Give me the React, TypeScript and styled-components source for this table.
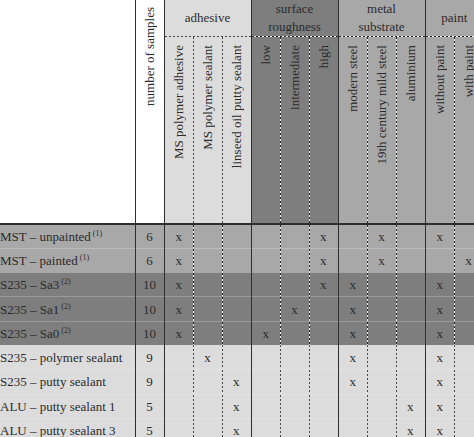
import styled, { createGlobalStyle, css } from 'styled-components';

type Tone = 'white' | 'light' | 'mid' | 'dark';
type Edge = 'solid' | 'dashed' | 'none';

const tones: Record<Tone, string> = {
  white: '#ffffff',
  light: '#dcdcdc',
  mid: '#a8a8a8',
  dark: '#7e7e7e',
};

const ink = '#2b2b2b';
const rule = '#2e2e2e';

type Group = {
  title: string[];
  tone: Tone;
  columns: string[];
};

const groups: Group[] = [
  { title: ['adhesive'], tone: 'light', columns: ['MS polymer adhesive', 'MS polymer sealant', 'linseed oil putty sealant'] },
  { title: ['surface', 'roughness'], tone: 'dark', columns: ['low', 'intermediate', 'high'] },
  { title: ['metal', 'substrate'], tone: 'mid', columns: ['modern steel', '19th century mild steel', 'aluminium'] },
  { title: ['paint'], tone: 'mid', columns: ['without paint', 'with paint'] },
];

type Sample = {
  label: string;
  note?: number;
  count: number;
  tone: Tone;
  split?: boolean;
  marks: number[];
};

const samples: Sample[] = [
  { label: 'MST – unpainted', note: 1, count: 6, tone: 'mid', marks: [0, 5, 7, 9] },
  { label: 'MST – painted', note: 1, count: 6, tone: 'mid', split: true, marks: [0, 5, 7, 10] },
  { label: 'S235 – Sa3', note: 2, count: 10, tone: 'dark', marks: [0, 5, 6, 9] },
  { label: 'S235 – Sa1', note: 2, count: 10, tone: 'dark', split: true, marks: [0, 4, 6, 9] },
  { label: 'S235 – Sa0', note: 2, count: 10, tone: 'dark', split: true, marks: [0, 3, 6, 9] },
  { label: 'S235 – polymer sealant', count: 9, tone: 'light', marks: [1, 6, 9] },
  { label: 'S235 – putty sealant', count: 9, tone: 'light', split: true, marks: [2, 6, 9] },
  { label: 'ALU – putty sealant 1', count: 5, tone: 'light', split: true, marks: [2, 8, 9] },
  { label: 'ALU – putty sealant 3', count: 5, tone: 'light', split: true, marks: [2, 8, 9] },
];

// flat list of attribute columns, with the kind of line on their left
const columns = groups.flatMap(g => g.columns.map((name, i) => ({ name, edge: (i === 0 ? 'solid' : 'dashed') as Edge })));

const dashes = (tone: Tone, side: 'left' | 'bottom') => {
  const light = tone === 'light' || tone === 'white';
  const dash = light ? '#4a4a4a' : '#2a2a2a';
  const gap = light ? 'transparent' : '#eeeeee';
  return css`
    background-image: repeating-linear-gradient(
      ${side === 'left' ? 'to bottom' : 'to right'},
      ${dash} 0 2px,
      ${gap} 2px 4px
    );
    background-repeat: no-repeat;
    background-size: ${side === 'left' ? '1px 100%' : '100% 1px'};
    background-position: ${side === 'left' ? 'left top' : 'left bottom'};
  `;
};

const GlobalStyle = createGlobalStyle`
  html, body {
    margin: 0;
    padding: 0;
    background: #ffffff;
    overflow: hidden;
  }
`;

const Table = styled.table`
  border-collapse: collapse;
  table-layout: fixed;
  width: 483px;
  font-family: 'Liberation Serif', 'DejaVu Serif', serif;
  font-size: 13px;
  color: ${ink};
`;

const Col = styled.col<{ $w: number }>`
  width: ${p => p.$w}px;
`;

const HeadRow = styled.tr<{ $h: number }>`
  height: ${p => p.$h}px;
`;

const Corner = styled.th`
  background: ${tones.white};
  border-right: 1px solid ${rule};
  padding: 0;
`;

const CountHead = styled.th`
  background: ${tones.white};
  border-right: 1px solid ${rule};
  vertical-align: top;
  padding: 7px 0 0;
  font-weight: normal;
`;

const GroupHead = styled.th<{ $tone: Tone }>`
  background-color: ${p => tones[p.$tone]};
  ${p => dashes(p.$tone, 'bottom')};
  border-left: 1px solid ${rule};
  font-weight: normal;
  line-height: 18px;
  padding: 0 0 1px;
  vertical-align: middle;
`;

const SubHead = styled.th<{ $tone: Tone; $edge: Edge }>`
  background-color: ${p => tones[p.$tone]};
  ${p => p.$edge === 'dashed' && dashes(p.$tone, 'left')};
  border-left: ${p => (p.$edge === 'solid' ? `1px solid ${rule}` : 'none')};
  vertical-align: top;
  padding: 8px 0 0;
  font-weight: normal;
`;

const Upright = styled.span`
  display: inline-block;
  writing-mode: vertical-rl;
  transform: rotate(180deg);
  white-space: nowrap;
  line-height: 15px;
`;

const Body = styled.tbody`
  & > tr:first-child > td {
    border-top: 2px solid ${rule};
  }
`;

const Row = styled.tr`
  height: 24.3px;
`;

const Cell = styled.td<{ $tone: Tone; $edge: Edge; $split?: boolean }>`
  background-color: ${p => tones[p.$tone]};
  ${p => p.$edge === 'dashed' && dashes(p.$tone, 'left')};
  border-left: ${p => (p.$edge === 'solid' ? `1px solid ${rule}` : 'none')};
  border-top: ${p => (p.$split ? '1px solid rgba(255, 255, 255, 0.22)' : 'none')};
  text-align: center;
  padding: 0;
  line-height: 15px;
`;

const LabelCell = styled.td<{ $tone: Tone; $split?: boolean }>`
  background-color: ${p => tones[p.$tone]};
  border-right: 1px solid ${rule};
  border-top: ${p => (p.$split ? '1px solid rgba(255, 255, 255, 0.22)' : 'none')};
  padding: 0 0 0 0;
  white-space: nowrap;
  line-height: 15px;
`;

const CountCell = styled(LabelCell)`
  text-align: center;
`;

const Note = styled.sup`
  font-size: 8px;
  vertical-align: 5px;
  line-height: 0;
  margin-left: 2px;
`;

export default function App() {
  return (
    <>
      <GlobalStyle />
      <Table>
        <colgroup>
          <Col $w={135} />
          <Col $w={29} />
          {columns.map(c => (
            <Col key={c.name} $w={29} />
          ))}
        </colgroup>
        <thead>
          <HeadRow $h={37}>
            <Corner rowSpan={2} />
            <CountHead rowSpan={2}>
              <Upright>number of samples</Upright>
            </CountHead>
            {groups.map(g => (
              <GroupHead key={g.title.join(' ')} colSpan={g.columns.length} $tone={g.tone}>
                {g.title.map(line => (
                  <div key={line}>{line}</div>
                ))}
              </GroupHead>
            ))}
          </HeadRow>
          <HeadRow $h={187}>
            {groups.flatMap(g =>
              g.columns.map((name, i) => (
                <SubHead key={name} $tone={g.tone} $edge={i === 0 ? 'solid' : 'dashed'}>
                  <Upright>{name}</Upright>
                </SubHead>
              )),
            )}
          </HeadRow>
        </thead>
        <Body>
          {samples.map(s => (
            <Row key={s.label}>
              <LabelCell $tone={s.tone} $split={s.split}>
                {s.label}
                {s.note && <Note>({s.note})</Note>}
              </LabelCell>
              <CountCell $tone={s.tone} $split={s.split}>
                {s.count}
              </CountCell>
              {columns.map((c, i) => (
                <Cell key={c.name} $tone={s.tone} $edge={c.edge} $split={s.split}>
                  {s.marks.includes(i) ? 'x' : ''}
                </Cell>
              ))}
            </Row>
          ))}
        </Body>
      </Table>
    </>
  );
}
